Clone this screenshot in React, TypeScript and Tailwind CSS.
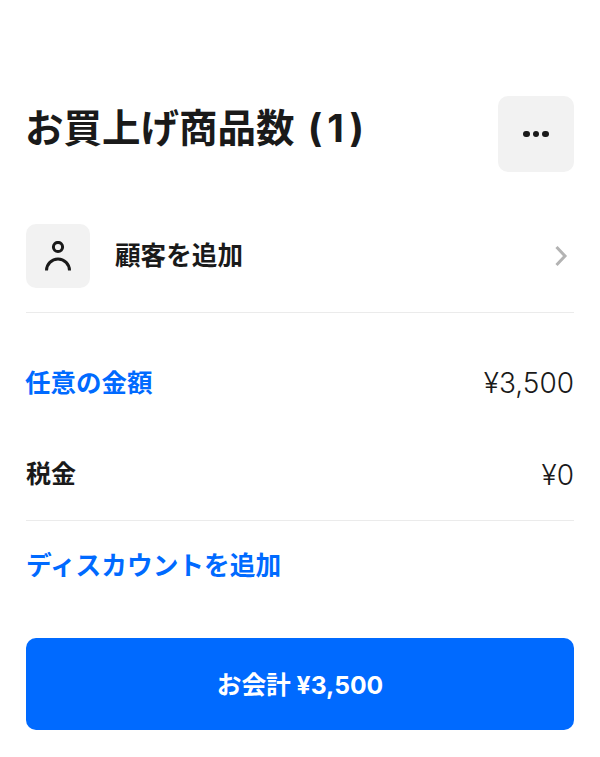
import React from "react";

export default function App() {
  return (
    <div className="w-[600px] h-[757px] bg-white px-[26px] pt-[96px] text-[#1a1a1a] font-['Inter','Noto_Sans_CJK_JP',sans-serif]">
      <div className="flex items-start justify-between h-[76px]">
        <h1 className="-ml-px text-[38.5px] leading-[64px] font-bold">
          お買上げ商品数 <span className="ml-[4px] tracking-[5px]">(1)</span>
        </h1>
        <div className="w-[76px] h-[76px] rounded-[10px] bg-[#f2f2f2] flex items-center justify-center gap-[3.2px]">
          <span className="w-[6.5px] h-[6.5px] rounded-full bg-[#1a1a1a]" />
          <span className="w-[6.5px] h-[6.5px] rounded-full bg-[#1a1a1a]" />
          <span className="w-[6.5px] h-[6.5px] rounded-full bg-[#1a1a1a]" />
        </div>
      </div>
      <div className="mt-[52px] flex items-center h-[64px]">
        <div className="w-[64px] h-[64px] rounded-[10px] bg-[#f2f2f2] flex items-center justify-center">
          <svg width="26" height="30" viewBox="0 0 26 30" fill="none" stroke="#1a1a1a" strokeWidth="3">
            <circle cx="13" cy="6" r="4.6" />
            <path d="M1.5 29.5a11.5 11.5 0 0 1 23 0" />
          </svg>
        </div>
        <span className="ml-[25px] text-[25.6px] font-semibold flex-1">顧客を追加</span>
        <svg width="14" height="22" viewBox="0 0 14 22" fill="none" stroke="#b3b3b3" strokeWidth="3" className="mr-[6px]">
          <path d="M2.5 2l8.5 9-8.5 9" />
        </svg>
      </div>
      <div className="mt-[24px] border-t border-[#ebebeb]" />
      <div className="mt-[45px] flex items-center justify-between h-[50px]">
        <span className="-ml-px text-[25.5px] font-semibold text-[#006aff]">任意の金額</span>
        <span className="text-[28px] font-light text-[#1a1a1a]">¥3,500</span>
      </div>
      <div className="mt-[42px] flex items-center justify-between h-[50px]">
        <span className="text-[25px] font-semibold">税金</span>
        <span className="text-[28px] font-light text-[#1a1a1a]">¥0</span>
      </div>
      <div className="mt-[20px] border-t border-[#ebebeb]" />
      <div className="mt-[24px] h-[42px] flex items-center text-[25.7px] font-semibold text-[#006aff]">ディスカウントを追加</div>
      <button className="mt-[51px] w-full h-[92px] pt-[3px] rounded-[10px] bg-[#006aff] text-white text-[24.7px] font-bold">お会計 ¥3,500</button>
    </div>
  );
}
